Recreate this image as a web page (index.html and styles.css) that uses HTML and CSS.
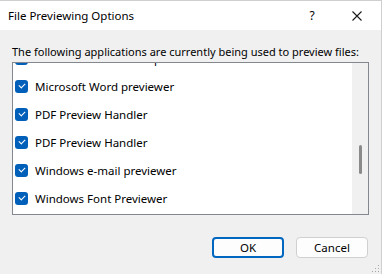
FILE: index.html
```html
<!DOCTYPE html>
<html lang="en">
<head>
    <meta charset="UTF-8">
    <title>File Previewing Options</title>
    <link rel="stylesheet" href="styles.css">
</head>
<body>
<div class="window">

    <div class="titlebar">
        <span class="title">File Previewing Options</span>
        <span class="help">?</span>
        <span class="close">
            <svg width="10" height="10" viewBox="0 0 10 10"><path d="M0.5 0.5 L9.5 9.5 M9.5 0.5 L0.5 9.5" stroke="#1a1a1a" stroke-width="1.1"/></svg>
        </span>
    </div>

    <div class="content">
        <p class="label">The following applications are currently being used to preview files:</p>

        <div class="listbox">
            <div class="items">
                <div class="row partial"><span class="check"></span><span>Microsoft PowerPoint previewer</span></div>
                <div class="row"><span class="check"></span><span>Microsoft Word previewer</span></div>
                <div class="row"><span class="check"></span><span>PDF Preview Handler</span></div>
                <div class="row"><span class="check"></span><span>PDF Preview Handler</span></div>
                <div class="row"><span class="check"></span><span>Windows e-mail previewer</span></div>
                <div class="row"><span class="check"></span><span>Windows Font Previewer</span></div>
            </div>
            <div class="scrollbar">
                <div class="thumb"></div>
            </div>
        </div>

        <div class="buttons">
            <button class="btn default">OK</button>
            <button class="btn">Cancel</button>
        </div>
    </div>

    <svg class="grip" width="8" height="8" viewBox="0 0 8 8">
        <rect x="6" y="0" width="1" height="1" fill="#a8a8a8"/>
        <rect x="3" y="3" width="1" height="1" fill="#a8a8a8"/>
        <rect x="6" y="3" width="1" height="1" fill="#a8a8a8"/>
        <rect x="0" y="6" width="1" height="1" fill="#a8a8a8"/>
        <rect x="3" y="6" width="1" height="1" fill="#a8a8a8"/>
        <rect x="6" y="6" width="1" height="1" fill="#a8a8a8"/>
    </svg>

</div>
</body>
</html>
```

FILE: styles.css
```css
* { box-sizing: border-box; }
body {
    margin: 0;
    font-family: "Noto Sans", "Open Sans", sans-serif;
    font-size: 11px;
    color: #000;
    background: #f0f0f0;
}
.window {
    width: 382px;
    height: 274px;
    position: relative;
    background: #f0f0f0;
    border-top: 1px solid #cfcfcf;
    border-right: 1px solid #cfcfcf;
    overflow: hidden;
}
/* Title bar */
.titlebar {
    height: 29px;
    background: #fff;
    display: flex;
    align-items: center;
    padding-left: 8px;
}
.title { flex: 1; font-size: 11.5px; }
.help {
    width: 46px;
    text-align: center;
    font-size: 12px;
}
.close {
    width: 46px;
    display: flex;
    justify-content: center;
    padding-right: 3px;
}
.content {
    padding: 14px 12px 0 12px;
}
.label {
    margin: 0 0 2px 0;
    line-height: 16px;
    white-space: nowrap;
}
/* List of previewers */
.listbox {
    height: 153px;
    border: 1px solid #828790;
    background: #fff;
    display: flex;
}
.items {
    flex: 1;
    overflow: hidden;
    padding-left: 2px;
}
.row {
    height: 28px;
    display: flex;
    align-items: center;
    gap: 7px;
    font-size: 11.5px;
}
.row.partial {
    height: 27px;
    margin-top: -18px;
}
.check {
    width: 13px;
    height: 13px;
    border-radius: 3px;
    background: #005fb8;
    position: relative;
    flex-shrink: 0;
}
.check::after {
    content: "";
    position: absolute;
    left: 4px;
    top: 3px;
    width: 5px;
    height: 3px;
    border-left: 1px solid #fff;
    border-bottom: 1px solid #fff;
    transform: rotate(-45deg);
}
.scrollbar {
    width: 16px;
    background: #f0f0f0;
    display: flex;
    justify-content: center;
}
.thumb {
    width: 3px;
    height: 29px;
    margin-top: 82px;
    border-radius: 2px;
    background: #8a8a8a;
}
/* Dialog buttons */
.buttons {
    display: flex;
    justify-content: flex-end;
    gap: 12px;
    margin-top: 22px;
    padding-right: 1px;
}
.btn {
    width: 72px;
    height: 21px;
    font-family: inherit;
    font-size: 11.5px;
    color: #000;
    background: #fdfdfd;
    border: 1px solid #d0d0d0;
    border-radius: 4px;
    padding: 0;
}
.btn.default {
    border: 2px solid #0067c0;
}
.grip {
    position: absolute;
    right: 1px;
    bottom: 1px;
}
```
